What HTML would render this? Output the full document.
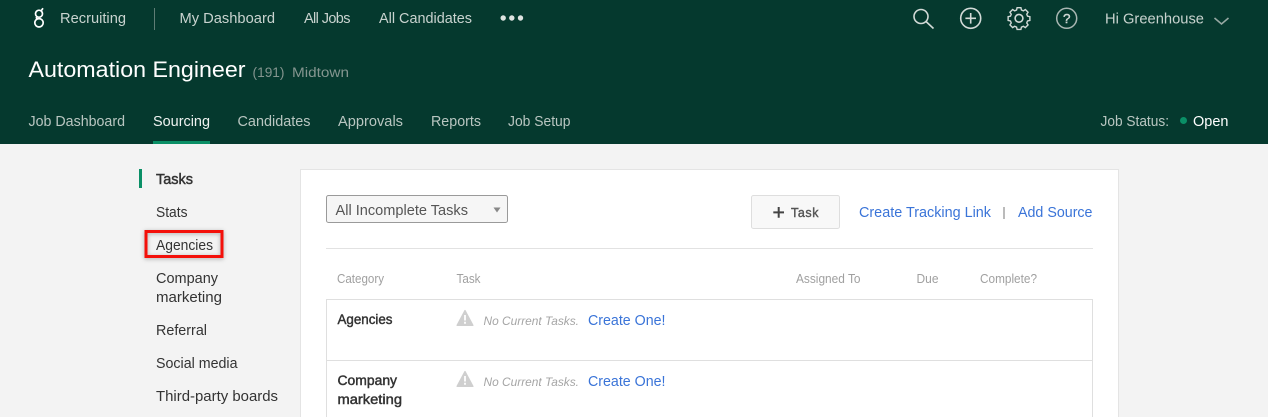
<!DOCTYPE html>
<html><head><meta charset="utf-8"><style>
html,body{margin:0;padding:0;width:1268px;height:417px;overflow:hidden;background:#f3f3f3}
svg{display:block}
text{font-family:"Liberation Sans",Arial,sans-serif;font-size:14.5px;white-space:pre}
.n{fill:#c9d3cf}.t{fill:#b9c6c1}.d{fill:#333}.l{fill:#3a74d8}.h{fill:#a0a0a0;font-size:12.5px}
.b{fill:#333;font-size:13.5px;stroke:#333;stroke-width:.45px}
.i{fill:#a5a5a5;font-size:12px;font-style:italic}
</style></head><body>
<svg width="1268" height="417" viewBox="0 0 1268 417" xmlns="http://www.w3.org/2000/svg">
<rect width="1268" height="144" fill="#05392e"/>
<g fill="none" stroke="#fff" stroke-width="1.700"><circle cx="39" cy="13.700" r="3.500"/><circle cx="39" cy="22.800" r="4.200"/><path d="M41 11l2-2.800M37 17q-1.500 1 .5 1.800"/></g>
<text class="n" x="60" y="23" textLength="66" lengthAdjust="spacingAndGlyphs">Recruiting</text>
<rect x="154" y="8" width="1" height="22" fill="#5f7d75"/>
<text class="n" x="179.500" y="23" textLength="95.500" lengthAdjust="spacingAndGlyphs">My Dashboard</text>
<text class="n" x="304" y="23" textLength="46.500" lengthAdjust="spacing">All Jobs</text>
<text class="n" x="379" y="23" textLength="93" lengthAdjust="spacingAndGlyphs">All Candidates</text>
<g fill="#dde3e0"><circle cx="503.200" cy="18" r="2.700"/><circle cx="511.800" cy="18" r="2.700"/><circle cx="520.500" cy="18" r="2.700"/></g>
<g fill="none" stroke="#d2dad7" stroke-width="1.600">
<circle cx="921" cy="16.500" r="7"/><path d="M926 21.500L933.500 28.500"/>
<circle cx="970.700" cy="18.300" r="10"/><path d="M970.700 13v10.600M965.400 18.300H976"/>
<circle cx="1019" cy="18.300" r="3.900"/>
<path d="M1016.800 8.300h4.400l.6 2.700 2.200.9 2.300-1.500 3.100 3.100-1.500 2.300.9 2.200 2.700.6v4.400l-2.700.6-.9 2.200 1.500 2.300-3.100 3.100-2.300-1.500-2.200.9-.6 2.700h-4.400l-.6-2.700-2.200-.9-2.300 1.500-3.100-3.100 1.500-2.300-.9-2.200-2.700-.6v-4.400l2.700-.6.9-2.200-1.500-2.300 3.100-3.100 2.300 1.500 2.200-.9z" transform="translate(1019 18.300) scale(.87) translate(-1019 -20.500)"/>
</g>
<g fill="none" stroke="#a9b6b2" stroke-width="1.500"><circle cx="1066.700" cy="18.300" r="10"/></g>
<text x="1063" y="23" fill="#cdd6d3" style="font-size:13px;stroke:#cdd6d3;stroke-width:.4px" textLength="7.500" lengthAdjust="spacingAndGlyphs">?</text>
<text class="n" x="1105" y="23.500" textLength="99" lengthAdjust="spacingAndGlyphs">Hi Greenhouse</text>
<path d="M1214.500 18L1221.500 24L1228.500 18" fill="none" stroke="#97a8a3" stroke-width="1.600"/>
<text x="28.500" y="77" fill="#fff" style="font-size:22px" textLength="217" lengthAdjust="spacingAndGlyphs">Automation Engineer</text>
<text x="252.500" y="77" fill="#84958f" style="font-size:13.500px" textLength="32" lengthAdjust="spacingAndGlyphs">(191)</text>
<text x="292" y="77" fill="#84958f" style="font-size:13.500px" textLength="57" lengthAdjust="spacingAndGlyphs">Midtown</text>
<text class="t" x="28.500" y="126" textLength="96.500" lengthAdjust="spacingAndGlyphs">Job Dashboard</text>
<text x="153" y="126" fill="#eef2f0" textLength="57" lengthAdjust="spacingAndGlyphs">Sourcing</text>
<rect x="153" y="141" width="57" height="3" fill="#0a8f66"/>
<text class="t" x="237.500" y="126" textLength="73" lengthAdjust="spacingAndGlyphs">Candidates</text>
<text class="t" x="338" y="126" textLength="65" lengthAdjust="spacingAndGlyphs">Approvals</text>
<text class="t" x="431" y="126" textLength="50" lengthAdjust="spacingAndGlyphs">Reports</text>
<text class="t" x="508" y="126" textLength="62.500" lengthAdjust="spacingAndGlyphs">Job Setup</text>
<text class="t" x="1100.500" y="126" textLength="68.500" lengthAdjust="spacingAndGlyphs">Job Status:</text>
<circle cx="1183.500" cy="120.500" r="3.500" fill="#0a8f66"/>
<text x="1193" y="126" fill="#fff" textLength="35.500" lengthAdjust="spacingAndGlyphs">Open</text>

<rect x="139" y="169" width="3" height="19" fill="#0a8f66"/>
<text class="d" x="156" y="184" textLength="37" lengthAdjust="spacingAndGlyphs" style="stroke:#333;stroke-width:.45px">Tasks</text>
<text class="d" x="156" y="217" textLength="31.500" lengthAdjust="spacingAndGlyphs">Stats</text>
<rect x="146" y="231.500" width="76" height="25" fill="none" stroke="#f4100a" stroke-width="3" style="filter:drop-shadow(0 1px 2px rgba(0,0,0,.3))"/>
<text class="d" x="156" y="250" textLength="57" lengthAdjust="spacingAndGlyphs">Agencies</text>
<text class="d" x="156" y="283" textLength="62" lengthAdjust="spacingAndGlyphs">Company</text>
<text class="d" x="156" y="302" textLength="66" lengthAdjust="spacingAndGlyphs">marketing</text>
<text class="d" x="156" y="335" textLength="51" lengthAdjust="spacingAndGlyphs">Referral</text>
<text class="d" x="156" y="368" textLength="81.500" lengthAdjust="spacingAndGlyphs">Social media</text>
<text class="d" x="156" y="401" textLength="122" lengthAdjust="spacingAndGlyphs">Third-party boards</text>

<rect x="300.500" y="169.500" width="818" height="260" fill="#fff" stroke="#e4e4e4"/>
<rect x="326.500" y="195.500" width="181" height="27" rx="2" fill="#f6f6f6" stroke="#9a9a9a"/>
<text x="335.500" y="215" fill="#555" textLength="132.500" lengthAdjust="spacingAndGlyphs">All Incomplete Tasks</text>
<path d="M493.500 207.500h7l-3.500 5z" fill="#888"/>
<rect x="751.500" y="195.500" width="88" height="33" rx="2" fill="#f8f8f8" stroke="#dedede"/>
<path d="M778.700 207v10.800M773.300 212.400H784" stroke="#444" stroke-width="2" fill="none"/>
<text x="791" y="217" fill="#555" style="font-size:12.500px;stroke:#555;stroke-width:.4px;letter-spacing:.5px" textLength="28" lengthAdjust="spacing">Task</text>
<text class="l" x="859" y="217" textLength="132" lengthAdjust="spacingAndGlyphs">Create Tracking Link</text>
<rect x="1003.500" y="207" width="1" height="12" fill="#777"/>
<text class="l" x="1018" y="217" textLength="74.500" lengthAdjust="spacingAndGlyphs">Add Source</text>
<rect x="326" y="248" width="767" height="1" fill="#e2e2e2"/>
<text class="h" x="337" y="283" textLength="47" lengthAdjust="spacingAndGlyphs">Category</text>
<text class="h" x="456.500" y="283" textLength="24" lengthAdjust="spacingAndGlyphs">Task</text>
<text class="h" x="796" y="283" textLength="64.500" lengthAdjust="spacingAndGlyphs">Assigned To</text>
<text class="h" x="916.500" y="283" textLength="22" lengthAdjust="spacingAndGlyphs">Due</text>
<text class="h" x="980" y="283" textLength="57" lengthAdjust="spacingAndGlyphs">Complete?</text>
<rect x="326.500" y="299.500" width="766" height="130" fill="#fff" stroke="#dfdfdf"/>
<rect x="326" y="360" width="767" height="1" fill="#dfdfdf"/>
<text class="b" x="337.500" y="324" textLength="55" lengthAdjust="spacingAndGlyphs">Agencies</text>
<text class="b" x="337.500" y="385" textLength="59.500" lengthAdjust="spacingAndGlyphs">Company</text>
<text class="b" x="337.500" y="404" textLength="64.500" lengthAdjust="spacingAndGlyphs">marketing</text>
<path d="M465 310.700L472.800 325.300H457.200z" fill="#cfcfcf" stroke="#cfcfcf" stroke-width="1.500" stroke-linejoin="round"/><path d="M465 315v5.500M465 321.800v2" stroke="#fff" stroke-width="1.800"/>
<path d="M465 371.700L472.800 386.300H457.200z" fill="#cfcfcf" stroke="#cfcfcf" stroke-width="1.500" stroke-linejoin="round"/><path d="M465 376v5.500M465 382.800v2" stroke="#fff" stroke-width="1.800"/>
<text class="i" x="483.500" y="325" textLength="95.500" lengthAdjust="spacingAndGlyphs">No Current Tasks.</text>
<text class="l" x="588" y="325" textLength="77.500" lengthAdjust="spacingAndGlyphs">Create One!</text>
<text class="i" x="483.500" y="386" textLength="95.500" lengthAdjust="spacingAndGlyphs">No Current Tasks.</text>
<text class="l" x="588" y="386" textLength="77.500" lengthAdjust="spacingAndGlyphs">Create One!</text>
</svg>
</body></html>
